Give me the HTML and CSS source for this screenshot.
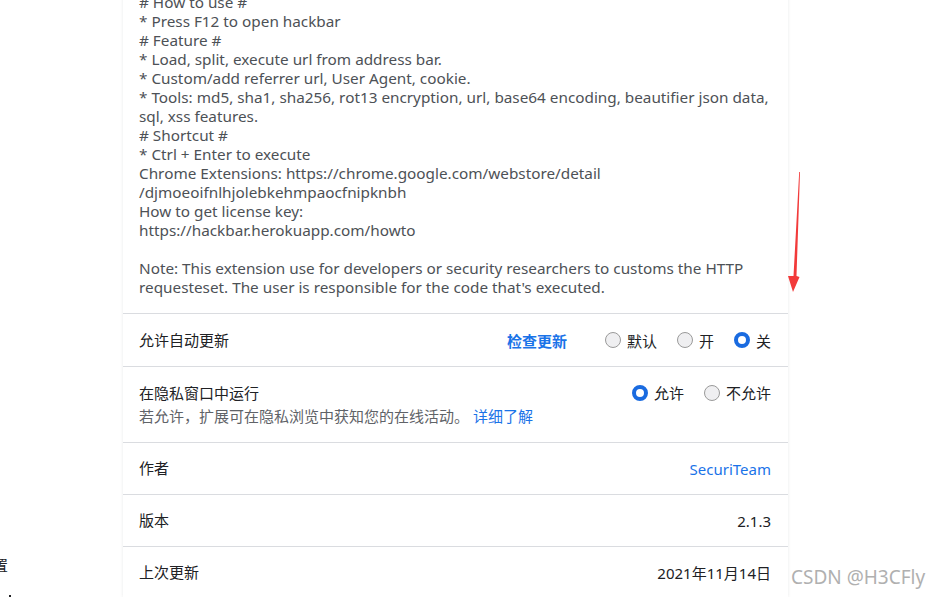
FILE: index.html
```html
<!DOCTYPE html>
<html lang="zh-CN">
<head>
    <meta charset="UTF-8">
    <title>HackBar - 扩展程序详情</title>
    <link rel="stylesheet" href="styles.css">
</head>
<body>

<div class="page">
    <!-- Side nav (mostly scrolled off) -->
    <aside class="side-nav">
        <span class="side-item">置</span>
        <span class="side-dot"></span>
    </aside>

    <!-- Details card -->
    <main class="card">
        <section class="description">
            <p># How to use #
* Press F12 to open hackbar
# Feature #
* Load, split, execute url from address bar.
* Custom/add referrer url, User Agent, cookie.
* Tools: md5, sha1, sha256, rot13 encryption, url, base64 encoding, beautifier json data, sql, xss features.
# Shortcut #
* Ctrl + Enter to execute
Chrome Extensions: https://chrome.google.com/webstore/detail
/djmoeoifnlhjolebkehmpaocfnipknbh
How to get license key:
https://hackbar.herokuapp.com/howto

Note: This extension use for developers or security researchers to customs the HTTP requesteset. The user is responsible for the code that's executed.</p>
        </section>

        <div class="row row-first">
            <div class="row-label">允许自动更新</div>
            <a class="check-update" href="#">检查更新</a>
            <div class="radio-group">
                <label class="radio"><span class="dot"></span>默认</label>
                <label class="radio"><span class="dot"></span>开</label>
                <label class="radio"><span class="dot checked"></span>关</label>
            </div>
        </div>

        <div class="row row-tall">
            <div class="row-label">
                <div>在隐私窗口中运行</div>
                <div class="sub-text">若允许，扩展可在隐私浏览中获知您的在线活动。 <a href="#">详细了解</a></div>
            </div>
            <div class="radio-group radio-top">
                <label class="radio"><span class="dot checked"></span>允许</label>
                <label class="radio"><span class="dot"></span>不允许</label>
            </div>
        </div>

        <div class="row">
            <div class="row-label">作者</div>
            <a class="row-value link" href="#">SecuriTeam</a>
        </div>

        <div class="row">
            <div class="row-label">版本</div>
            <div class="row-value">2.1.3</div>
        </div>

        <div class="row">
            <div class="row-label">上次更新</div>
            <div class="row-value">2021年11月14日</div>
        </div>
    </main>
</div>

<!-- Screenshot annotations -->
<svg class="arrow" width="30" height="130" viewBox="0 0 30 130">
    <path d="M20 0 L19.2 0 L13.5 104 L8 104 L13 120 L19.5 105 L16.5 104 Z" fill="#f23a3a"/>
</svg>
<div class="watermark">CSDN @H3CFly</div>

</body>
</html>
```

FILE: styles.css
```css
/* Global styles */
body {
    font-family: "Segoe UI", "Noto Sans", "Noto Sans CJK SC", sans-serif;
    background-color: #fff;
    margin: 0;
    padding: 0;
    color: #202124;
    overflow: hidden;
}

a {
    color: #1a73e8;
    text-decoration: none;
}

.page {
    display: flex;
    height: 597px;
    overflow: hidden;
}

/* Side nav */
.side-nav {
    width: 123px;
    display: flex;
    flex-direction: column;
    justify-content: flex-end;
}

.side-item {
    font-family: "Noto Sans CJK SC", sans-serif;
    font-size: 15px;
    margin-left: -7px;
    line-height: 20px;
}

.side-dot {
    display: block;
    width: 2px;
    height: 2px;
    background: #202124;
    margin: 20px 0 0 9px;
}

/* Card */
.card {
    width: 665px;
    margin-top: -7px;
    background: #fff;
    box-shadow: 0 0 3px rgba(60, 64, 67, 0.12);
}

.description {
    padding: 0 16px 16px;
}

.description p {
    margin: 0;
    white-space: pre-wrap;
    font-size: 15.3px;
    line-height: 19px;
    color: #4d5156;
}

.row {
    display: flex;
    align-items: center;
    height: 51px;
    padding: 0 17px 0 16px;
    border-top: 1px solid #dadce0;
    font-family: "Noto Sans", "Noto Sans CJK SC", sans-serif;
    font-size: 15px;
}

.row-first {
    height: 52px;
}

.row-tall {
    height: 76px;
    align-items: flex-start;
    padding-top: 15px;
    box-sizing: border-box;
}

.row-label {
    flex: 1;
    line-height: 23px;
}

.sub-text {
    color: #5f6368;
}

.check-update {
    font-weight: bold;
    margin-right: 38px;
}

.radio-group {
    display: flex;
    gap: 20px;
}

.radio {
    display: flex;
    align-items: center;
    gap: 6px;
}

.dot {
    display: inline-block;
    width: 16px;
    height: 16px;
    box-sizing: border-box;
    border-radius: 50%;
    border: 1px solid #9a9a9a;
    background: #efeff1;
}

.dot.checked {
    border: 4.5px solid #1a6be0;
    background: #fff;
}

.row-value.link {
    color: #1a73e8;
}

/* Annotations */
.arrow {
    position: absolute;
    left: 780px;
    top: 172px;
}

.watermark {
    position: absolute;
    left: 791px;
    top: 565px;
    font-family: "Segoe UI", "Noto Sans", sans-serif;
    font-size: 19px;
    color: #b0b0b0;
    line-height: 24px;
}
```
